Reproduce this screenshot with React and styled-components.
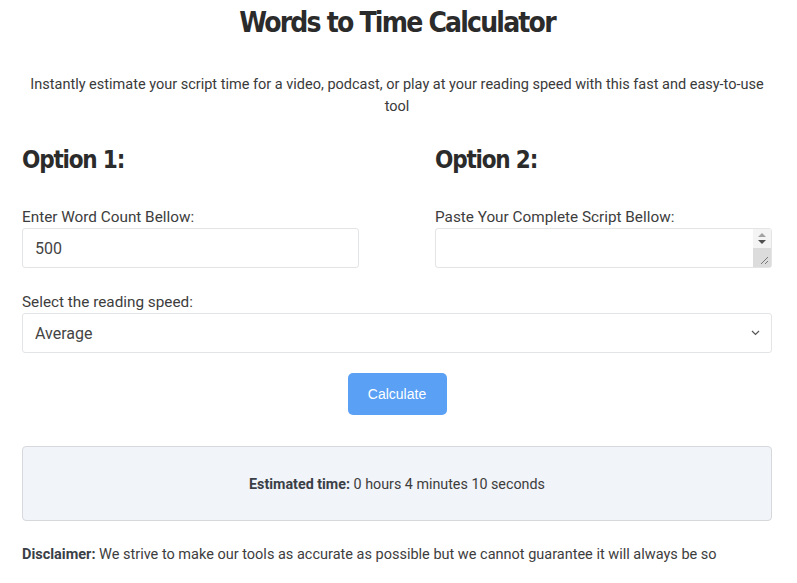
import { useState } from "react";
import styled, { createGlobalStyle } from "styled-components";

const GlobalStyle = createGlobalStyle`
  * { box-sizing: border-box; }
  body {
    margin: 0;
    background: #fff;
    color: #333;
    font-family: Roboto, "Noto Sans", sans-serif;
  }
`;

const Page = styled.div`
  width: 750px;
  margin: 0 0 0 22px;
  padding-top: 4px;
`;

const Title = styled.h1`
  margin: 0;
  text-align: center;
  font-family: "DejaVu Sans Condensed", "DejaVu Sans", sans-serif;
  font-weight: 700;
  font-size: 28px;
  letter-spacing: -1.8px;
  line-height: 38px;
  color: #2b2b2b;
`;

const Lead = styled.p`
  margin: 32px 0 0;
  text-align: center;
  font-size: 14.5px;
  line-height: 22px;
  color: #3a3a3a;
`;

const Options = styled.div`
  display: grid;
  grid-template-columns: 1fr 1fr;
  column-gap: 76px;
  margin-top: 25px;
`;

const Option = styled.div`
  display: flex;
  flex-direction: column;
`;

const OptionTitle = styled.h2`
  margin: 0;
  font-family: "DejaVu Sans Condensed", "DejaVu Sans", sans-serif;
  font-weight: 700;
  font-size: 24px;
  line-height: 34px;
  color: #2b2b2b;
  letter-spacing: -1.2px;
`;

const Label = styled.label`
  display: block;
  margin: ${(p) => p.$top || 0}px 0 1px;
  font-size: 15.3px;
  line-height: 20px;
  color: #3d3d3d;
`;

const fieldStyles = `
  width: 100%;
  height: 40px;
  border: 1px solid #e3e4e6;
  border-radius: 3px;
  background: #fff;
  padding: 0 12px;
  font-family: Roboto, "Noto Sans", sans-serif;
  font-size: 16px;
  color: #444;
  outline: none;
`;

const Input = styled.input`
  ${fieldStyles}
`;

const ScriptWrap = styled.div`
  position: relative;
`;

const Script = styled.textarea`
  ${fieldStyles}
  display: block;
  padding: 8px 30px 8px 12px;
  resize: none;
`;

const Scrollbar = styled.div`
  position: absolute;
  top: 1px;
  right: 1px;
  bottom: 1px;
  width: 18px;
  display: flex;
  flex-direction: column;
  background: #f4f4f4;
  pointer-events: none;
`;

const Arrows = styled.div`
  flex: 1;
  display: flex;
  flex-direction: column;
  align-items: center;
  justify-content: center;
  gap: 3px;
`;

const Arrow = styled.span`
  width: 0;
  height: 0;
  border-left: 4px solid transparent;
  border-right: 4px solid transparent;
  ${(p) =>
    p.$down
      ? "border-top: 4px solid #505050;"
      : "border-bottom: 4px solid #a3a3a3;"}
`;

const Grip = styled.div`
  height: 19px;
  background: #dcdcdc;
  display: flex;
  align-items: flex-end;
  justify-content: flex-end;
  padding: 0 2px 2px 0;
`;

const SelectWrap = styled.div`
  position: relative;
`;

const Select = styled.select`
  ${fieldStyles}
  appearance: none;
`;

const Chevron = styled.svg`
  position: absolute;
  right: 12px;
  top: 17px;
  pointer-events: none;
`;

const Actions = styled.div`
  display: flex;
  justify-content: center;
  margin-top: 20px;
`;

const Button = styled.button`
  width: 99px;
  height: 42px;
  border: none;
  border-radius: 5px;
  background: #5aa0f4;
  color: #fff;
  font-family: "Liberation Sans", Arial, sans-serif;
  font-size: 14px;
  cursor: pointer;
`;

const Result = styled.div`
  margin-top: 31px;
  height: 75px;
  display: flex;
  align-items: center;
  justify-content: center;
  background: #f1f4f8;
  border: 1px solid #d6d8db;
  border-radius: 4px;
  font-size: 14.3px;
  color: #3d3d3d;
  b { color: #3a3f47; }
`;

const Disclaimer = styled.p`
  margin: 25px 0 0;
  font-size: 14.5px;
  color: #3d3d3d;
  b { color: #3a3f47; }
`;

const speeds = { Slow: 100, Average: 120, Fast: 160 };

function formatTime(words, wpm) {
  const total = Math.round((words / wpm) * 60);
  const h = Math.floor(total / 3600);
  const m = Math.floor((total % 3600) / 60);
  const s = total % 60;
  return `${h} hours ${m} minutes ${s} seconds`;
}

export default function App() {
  const [count, setCount] = useState("500");
  const [script, setScript] = useState("");
  const [speed, setSpeed] = useState("Average");
  const [time, setTime] = useState(formatTime(500, 120));

  const calculate = () => {
    const words = script.trim()
      ? script.trim().split(/\s+/).length
      : Number(count) || 0;
    setTime(formatTime(words, speeds[speed]));
  };

  return (
    <Page>
      <GlobalStyle />
      <Title>Words to Time Calculator</Title>
      <Lead>
        Instantly estimate your script time for a video, podcast, or play at your
        reading speed with this fast and easy-to-use tool
      </Lead>
      <Options>
        <Option>
          <OptionTitle>Option 1:</OptionTitle>
          <Label $top={30}>Enter Word Count Bellow:</Label>
          <Input value={count} onChange={(e) => setCount(e.target.value)} />
        </Option>
        <Option>
          <OptionTitle>Option 2:</OptionTitle>
          <Label $top={30}>Paste Your Complete Script Bellow:</Label>
          <ScriptWrap>
            <Script value={script} onChange={(e) => setScript(e.target.value)} />
            <Scrollbar>
              <Arrows>
                <Arrow />
                <Arrow $down />
              </Arrows>
              <Grip>
                <svg width="9" height="9" viewBox="0 0 9 9">
                  <path d="M8 1L1 8M8 5L5 8" stroke="#777" strokeWidth="1" />
                </svg>
              </Grip>
            </Scrollbar>
          </ScriptWrap>
        </Option>
      </Options>
      <Label $top={24}>Select the reading speed:</Label>
      <SelectWrap>
        <Select value={speed} onChange={(e) => setSpeed(e.target.value)}>
          {Object.keys(speeds).map((k) => (
            <option key={k}>{k}</option>
          ))}
        </Select>
        <Chevron width="9" height="6" viewBox="0 0 9 6">
          <path d="M1 1l3.5 3.5L8 1" fill="none" stroke="#555" strokeWidth="1.2" />
        </Chevron>
      </SelectWrap>
      <Actions>
        <Button onClick={calculate}>Calculate</Button>
      </Actions>
      <Result>
        <span>
          <b>Estimated time:</b> {time}
        </span>
      </Result>
      <Disclaimer>
        <b>Disclaimer:</b> We strive to make our tools as accurate as possible but
        we cannot guarantee it will always be so
      </Disclaimer>
    </Page>
  );
}
